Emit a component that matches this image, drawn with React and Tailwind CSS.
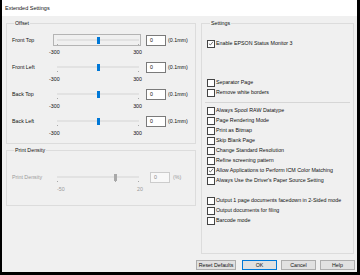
import clsx from 'clsx';

const OFFSETS = ['Front Top', 'Front Left', 'Back Top', 'Back Left'];

const GROUP_A = ['Separator Page', 'Remove white borders'];
const GROUP_B = [
  ['Always Spool RAW Datatype', false],
  ['Page Rendering Mode', false],
  ['Print as Bitmap', false],
  ['Skip Blank Page', false],
  ['Change Standard Resolution', false],
  ['Refine screening pattern', false],
  ['Allow Applications to Perform ICM Color Matching', true],
  ["Always Use the Driver's Paper Source Setting", false],
];
const GROUP_C = [
  'Output 1 page documents facedown in 2-Sided mode',
  'Output documents for filing',
  'Barcode mode',
];

const TRACK = 82;

function Slider({ value, min, max, ticks, focused, disabled }) {
  const at = (v) => Math.round(((v - min) / (max - min)) * (TRACK - 1));
  return (
    <div
      className={clsx(
        'relative h-[12px] w-[88px] shrink-0',
        focused && 'border border-[#b4b4b4]',
      )}
    >
      <div
        className={clsx(
          'absolute h-[2px] w-[82px] bg-[#e2e2e2]',
          focused ? 'left-[3px] top-[4px]' : 'left-[4px] top-[5px]',
        )}
      />
      {ticks.map((t) => (
        <div
          key={t}
          className={clsx(
            'absolute h-[1px] w-[1px] bg-[#a8a8a8]',
            focused ? 'top-[8.5px]' : 'top-[9.5px]',
          )}
          style={{ left: (focused ? 3 : 4) + at(t) }}
        />
      ))}
      <div
        className={clsx(
          'absolute h-[7px] w-[3px]',
          focused ? 'top-[1.5px]' : 'top-[2.5px]',
          disabled ? 'bg-[#a9a9a9]' : 'bg-[#0078d7]',
        )}
        style={{ left: (focused ? 2 : 3) + at(value) }}
      />
    </div>
  );
}

function NumberBox({ disabled }) {
  return (
    <div
      className={clsx(
        'flex h-[11px] w-[20px] shrink-0 items-center border pl-[3px]',
        disabled ? 'border-[#cccccc] bg-[#f8f8f8] text-[#8a8a8a]' : 'border-[#7a7a7a] bg-white',
      )}
    >
      0
    </div>
  );
}

function Check({ label, checked }) {
  return (
    <div className="flex h-[10px] items-center gap-[1px]">
      <div className="flex h-[8px] w-[8px] shrink-0 items-center justify-center border border-[#444444] bg-white">
        {checked ? (
          <svg viewBox="0 0 8 8" className="h-[7px] w-[7px]">
            <path d="M1.2 4.2 L3.1 6 L6.8 1.6" fill="none" stroke="#333" strokeWidth="0.9" />
          </svg>
        ) : null}
      </div>
      <span className="whitespace-nowrap">{label}</span>
    </div>
  );
}

function Button({ children, primary, className }) {
  return (
    <div
      className={clsx(
        'flex h-[10px] items-center justify-center border bg-[#e1e1e1]',
        primary ? 'border-[#0078d7]' : 'border-[#adadad]',
        className,
      )}
    >
      {children}
    </div>
  );
}

export default function App() {
  return (
    <div className="h-[275px] w-[360px] overflow-hidden border-b-[3px] border-l-2 border-r-[3px] border-black bg-black font-['Liberation_Sans',Arial,sans-serif] text-[5.3px] leading-[7px] text-[#111111]">
      <div className="flex h-[16px] items-center bg-white pl-[3px] text-[5.5px]">Extended Settings</div>
      <div className="flex h-[256px] flex-col bg-[#f0f0f0] pl-[4px] pt-[4px]">
        <div className="flex h-[234px] gap-[5px]">
          <div className="flex w-[190px] flex-col gap-[3px]">
            <fieldset className="h-[124px] border border-[#dcdcdc] pl-[5px] pt-[7px]">
              <legend className="ml-[2px] px-[1px]">Offset</legend>
              <div className="flex flex-col gap-[5px]">
                {OFFSETS.map((name, i) => (
                  <div key={name} className="flex flex-col">
                    <div className="flex h-[12px] items-center">
                      <span className="w-[41px] shrink-0 whitespace-nowrap">{name}</span>
                      <Slider value={0} min={-300} max={300} ticks={[-300, 300]} focused={i === 0} />
                      <div className="ml-[5px]">
                        <NumberBox />
                      </div>
                      <span className="ml-[2px] whitespace-nowrap">(0.1mm)</span>
                    </div>
                    <div className="ml-[37px] mt-[3px] flex h-[7px] w-[93px] justify-between">
                      <span>-300</span>
                      <span>300</span>
                    </div>
                  </div>
                ))}
              </div>
            </fieldset>
            <fieldset className="h-[59px] border border-[#dcdcdc] pl-[5px] pt-[17px]">
              <legend className="ml-[2px] px-[1px]">Print Density</legend>
              <div className="flex flex-col text-[#9a9a9a]">
                <div className="flex h-[12px] items-center">
                  <span className="w-[41px] shrink-0 whitespace-nowrap">Print Density</span>
                  <Slider value={0} min={-50} max={20} ticks={[-50, 0, 20]} disabled />
                  <div className="ml-[9px]">
                    <NumberBox disabled />
                  </div>
                  <span className="ml-[3px]">(%)</span>
                </div>
                <div className="ml-[45px] mt-[3px] flex h-[7px] w-[86px] justify-between">
                  <span>-50</span>
                  <span>20</span>
                </div>
              </div>
            </fieldset>
          </div>
          <fieldset className="h-[234px] w-[153px] border border-[#dcdcdc] pl-[5px] pt-[11.5px]">
            <legend className="ml-[3px] px-[1px]">Settings</legend>
            <Check label="Enable EPSON Status Monitor 3" checked />
            <div className="mt-[29px]">
              {GROUP_A.map((l) => (
                <Check key={l} label={l} />
              ))}
            </div>
            <div className="ml-[-2px] mr-[3px] mt-[4px] h-[1px] bg-[#d6d6d6]" />
            <div className="mt-[3px]">
              {GROUP_B.map(([l, c]) => (
                <Check key={l} label={l} checked={c} />
              ))}
            </div>
            <div className="mt-[10px]">
              {GROUP_C.map((l) => (
                <Check key={l} label={l} />
              ))}
            </div>
          </fieldset>
        </div>
        <div className="mt-[6px] flex justify-end pr-[2px]">
          <Button className="w-[40px]">Reset Defaults</Button>
          <Button primary className="ml-[6px] w-[35px]">
            OK
          </Button>
          <Button className="ml-[4px] w-[35px]">Cancel</Button>
          <Button className="ml-[4px] w-[35px]">Help</Button>
        </div>
      </div>
    </div>
  );
}
